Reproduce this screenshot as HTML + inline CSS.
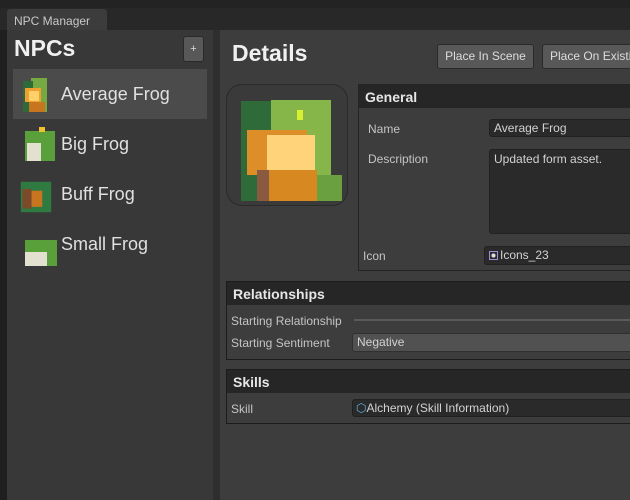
<!DOCTYPE html><html><head><style>
*{margin:0;padding:0;box-sizing:border-box}
body{width:630px;height:500px;background:#1f1f1f;font-family:"Liberation Sans",sans-serif;position:relative;overflow:hidden;color:#d2d2d2}
.a{position:absolute;white-space:nowrap}
.t{font-size:12px;color:#c4c4c4}
.fld{position:absolute;background:#2a2a2a;border:1px solid #212121;border-radius:3px;font-size:12px;color:#d2d2d2;padding:2px 4px;white-space:nowrap;overflow:hidden}
.hdr{position:absolute;background:#262626;font-weight:bold;font-size:14px;color:#e6e6e6;padding:4px 6px}
.btn{position:absolute;background:#585858;border:1px solid #2a2a2a;border-radius:3px;font-size:12px;color:#dcdcdc;text-align:center;line-height:22px;white-space:nowrap;overflow:hidden}
.frog{position:absolute;width:34px;height:34px}
</style></head><body>
<div class="a" style="left:0;top:0;width:630px;height:8px;background:#232323"></div>
<div class="a" style="left:0;top:8px;width:630px;height:22px;background:#282828"></div>
<div class="a" style="left:7px;top:9px;width:100px;height:22px;background:#3c3c3c;border-radius:3px 3px 0 0;font-size:12px;color:#c8c8c8;padding:5px 7px">NPC Manager</div>
<div class="a" style="left:7px;top:30px;width:208px;height:470px;background:#383838"></div>
<div class="a" style="left:213px;top:30px;width:7px;height:470px;background:#2e2e2e"></div>
<div class="a" style="left:220px;top:30px;width:410px;height:470px;background:#3d3d3d"></div>
<div class="a" style="left:14px;top:35px;font-size:23px;font-weight:bold;color:#f0f0f0">NPCs</div>
<div class="btn" style="left:183px;top:36px;width:21px;height:26px;line-height:24px;font-size:11px">+</div>
<div class="a" style="left:13px;top:69px;width:194px;height:50px;background:#4b4b4b"></div>
<svg class="frog" style="left:23px;top:78px" viewBox="0 0 34 34"><rect x="8" y="0" width="16" height="34" fill="#77a943"/><rect x="0" y="3" width="10" height="20" fill="#2e6b38"/><rect x="2" y="10" width="16" height="14" fill="#f0a030"/><rect x="6" y="13" width="10" height="10" fill="#ffd06a"/><rect x="6" y="24" width="16" height="10" fill="#c7751e"/><rect x="0" y="24" width="6" height="10" fill="#2e6b38"/></svg>
<div class="a" style="left:61px;top:84px;font-size:18px;color:#e0e0e0">Average Frog</div>
<svg class="frog" style="left:23px;top:127px" viewBox="0 0 34 34"><rect x="2" y="4" width="30" height="30" fill="#5aa03a"/><rect x="4" y="16" width="14" height="18" fill="#e4e0d0"/><rect x="16" y="0" width="6" height="5" fill="#f0c030"/></svg>
<div class="a" style="left:61px;top:134px;font-size:18px;color:#e0e0e0">Big Frog</div>
<svg class="frog" style="left:19px;top:180px" viewBox="0 0 38 34"><rect x="2" y="0" width="34" height="34" fill="#2f7a40"/><rect x="4" y="10" width="22" height="18" fill="#c7751e"/><rect x="4" y="8" width="10" height="22" fill="#7a4a2a"/></svg>
<div class="a" style="left:61px;top:184px;font-size:18px;color:#e0e0e0">Buff Frog</div>
<svg class="frog" style="left:23px;top:236px" viewBox="0 0 34 26"><rect x="2" y="0" width="32" height="26" fill="#5aa03a"/><rect x="2" y="12" width="22" height="14" fill="#e4e0d0"/></svg>
<div class="a" style="left:61px;top:234px;font-size:18px;color:#e0e0e0">Small Frog</div>
<div class="a" style="left:232px;top:40px;font-size:23px;font-weight:bold;color:#f0f0f0">Details</div>
<div class="btn" style="left:437px;top:44px;width:97px;height:25px">Place In Scene</div>
<div class="btn" style="left:542px;top:44px;width:100px;height:25px;text-align:left;padding-left:7px">Place On Existing</div>
<div class="a" style="left:226px;top:84px;width:122px;height:122px;border:1px solid #2a2a2a;border-radius:16px;background:#3a3a3a;overflow:hidden">
<svg width="122" height="122" viewBox="0 0 122 122" style="position:absolute;left:0;top:0"><rect x="14" y="16" width="40" height="100" fill="#2e6b38"/><rect x="44" y="15" width="60" height="101" fill="#86b54a"/><rect x="20" y="45" width="60" height="45" fill="#de8e28"/><rect x="40" y="50" width="48" height="40" fill="#ffd37a"/><rect x="30" y="85" width="60" height="31" fill="#d88820"/><rect x="30" y="85" width="12" height="31" fill="#8a5a40"/><rect x="70" y="25" width="6" height="10" fill="#d8f030"/><rect x="90" y="90" width="25" height="26" fill="#6aa040"/></svg></div>
<div class="a" style="left:358px;top:84px;width:280px;height:187px;border:1px solid #242424;border-right:none"></div>
<div class="hdr" style="left:359px;top:85px;width:271px;height:23px">General</div>
<div class="a t" style="left:368px;top:122px">Name</div>
<div class="fld" style="left:489px;top:119px;width:150px;height:18px;line-height:12px">Average Frog</div>
<div class="a t" style="left:368px;top:152px">Description</div>
<div class="fld" style="left:489px;top:149px;width:150px;height:85px">Updated form asset.</div>
<div class="a t" style="left:363px;top:249px">Icon</div>
<div class="fld" style="left:484px;top:246px;width:155px;height:19px;line-height:13px"><span style="display:inline-block;width:9px;height:9px;border:1px solid #a48ad8;vertical-align:-1px;margin-right:2px;background:radial-gradient(#ddd 40%,transparent 45%)"></span>Icons_23</div>
<div class="a" style="left:226px;top:281px;width:410px;height:79px;border:1px solid #1c1c1c"></div>
<div class="hdr" style="left:227px;top:282px;width:410px;height:23px">Relationships</div>
<div class="a t" style="left:231px;top:314px">Starting Relationship</div>
<div class="a" style="left:354px;top:319px;width:280px;height:2px;background:#5a5a5a"></div>
<div class="a t" style="left:231px;top:336px">Starting Sentiment</div>
<div class="fld" style="left:352px;top:333px;width:285px;height:19px;line-height:13px;background:#515151;border-color:#303030">Negative</div>
<div class="a" style="left:226px;top:369px;width:410px;height:55px;border:1px solid #1c1c1c"></div>
<div class="hdr" style="left:227px;top:370px;width:410px;height:23px">Skills</div>
<div class="a t" style="left:231px;top:402px">Skill</div>
<div class="fld" style="left:352px;top:399px;width:285px;height:18px;line-height:12px;padding-left:3px"><span style="color:#5ab0e0">⬡</span>Alchemy (Skill Information)</div>
</body></html>
